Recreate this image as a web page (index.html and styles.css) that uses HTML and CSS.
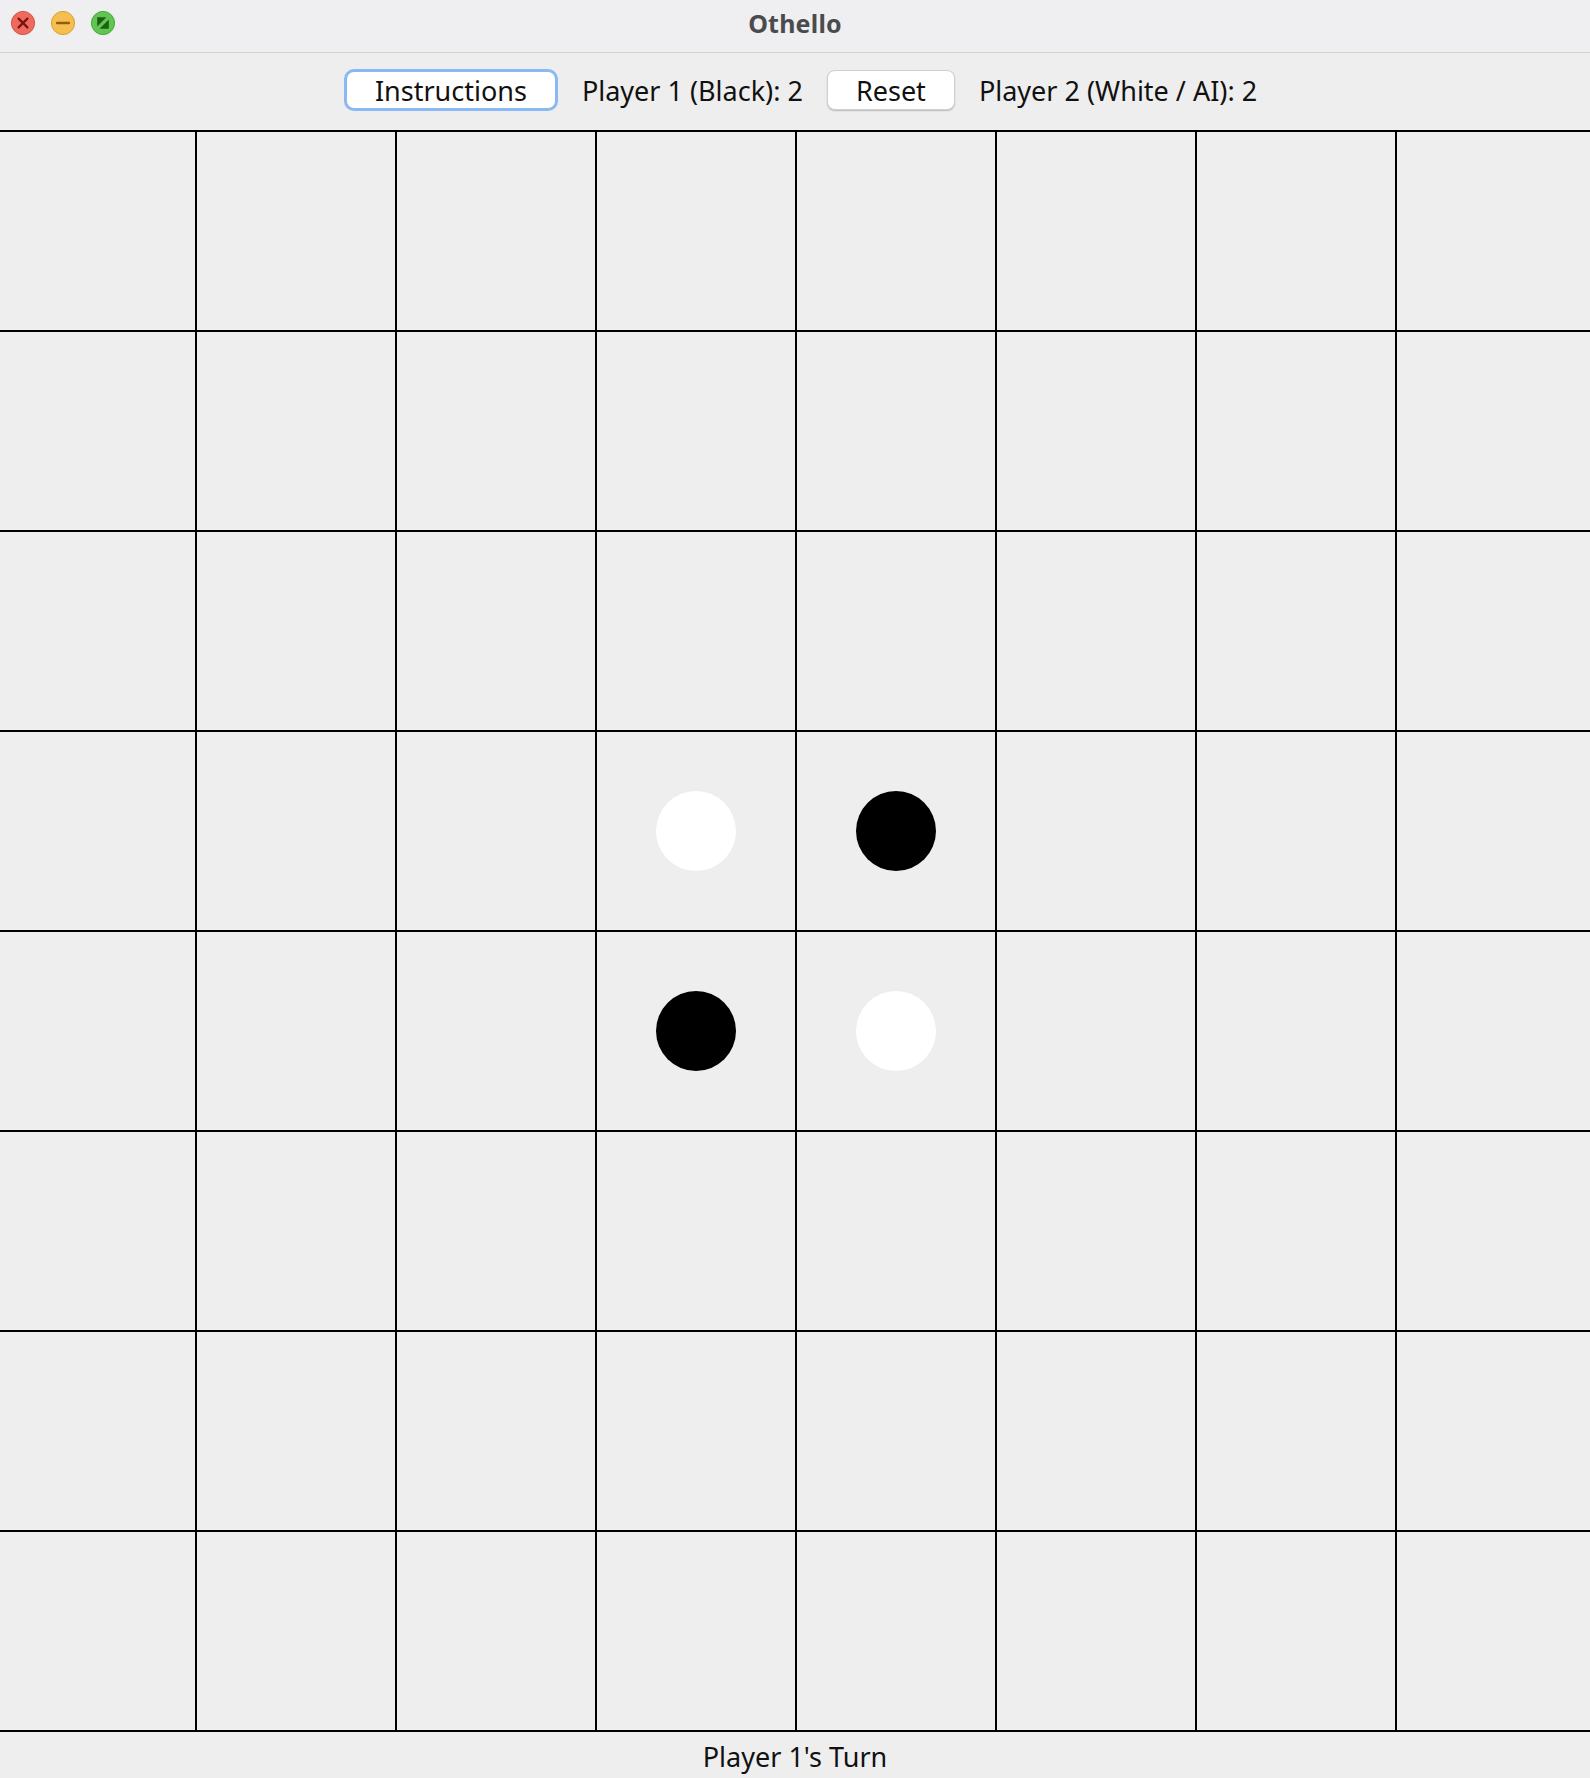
FILE: index.html
```html
<!DOCTYPE html>
<html>
<head>
<meta charset="utf-8">
<title>Othello</title>
<link rel="stylesheet" href="styles.css">
</head>
<body>
<div class="window">
  <div class="titlebar">
    <div class="lights">
      <svg class="light" width="26" height="26" viewBox="0 0 26 26">
        <circle cx="13" cy="13" r="11.6" fill="#ee6a5f" stroke="#d4544a" stroke-width="1"/>
        <path d="M8.6 8.6 L17.4 17.4 M17.4 8.6 L8.6 17.4" stroke="#7a1410" stroke-width="2.3" stroke-linecap="round"/>
      </svg>
      <svg class="light" width="26" height="26" viewBox="0 0 26 26">
        <circle cx="13" cy="13" r="11.6" fill="#f5bf4f" stroke="#d9a133" stroke-width="1"/>
        <path d="M7.2 13 L18.8 13" stroke="#985712" stroke-width="2.6" stroke-linecap="round"/>
      </svg>
      <svg class="light" width="26" height="26" viewBox="0 0 26 26">
        <circle cx="13" cy="13" r="11.6" fill="#61c554" stroke="#4aa73d" stroke-width="1"/>
        <path d="M7.2 7.2 L16.4 7.2 L7.2 16.4 Z" fill="#1c5f12"/>
        <path d="M18.8 18.8 L9.6 18.8 L18.8 9.6 Z" fill="#1c5f12"/>
      </svg>
    </div>
    <div class="title">Othello</div>
  </div>
  <div class="toolbar">
    <button class="btn btn-focus">Instructions</button>
    <span class="score">Player 1 (Black): 2</span>
    <button class="btn btn-plain">Reset</button>
    <span class="score">Player 2 (White / AI): 2</span>
  </div>
  <div class="board-wrap">
    <div class="board">
      <div class="cell"></div><div class="cell"></div><div class="cell"></div><div class="cell"></div><div class="cell"></div><div class="cell"></div><div class="cell"></div><div class="cell"></div>
      <div class="cell"></div><div class="cell"></div><div class="cell"></div><div class="cell"></div><div class="cell"></div><div class="cell"></div><div class="cell"></div><div class="cell"></div>
      <div class="cell"></div><div class="cell"></div><div class="cell"></div><div class="cell"></div><div class="cell"></div><div class="cell"></div><div class="cell"></div><div class="cell"></div>
      <div class="cell"></div><div class="cell"></div><div class="cell"></div><div class="cell"><div class="disc white"></div></div><div class="cell"><div class="disc black"></div></div><div class="cell"></div><div class="cell"></div><div class="cell"></div>
      <div class="cell"></div><div class="cell"></div><div class="cell"></div><div class="cell"><div class="disc black"></div></div><div class="cell"><div class="disc white"></div></div><div class="cell"></div><div class="cell"></div><div class="cell"></div>
      <div class="cell"></div><div class="cell"></div><div class="cell"></div><div class="cell"></div><div class="cell"></div><div class="cell"></div><div class="cell"></div><div class="cell"></div>
      <div class="cell"></div><div class="cell"></div><div class="cell"></div><div class="cell"></div><div class="cell"></div><div class="cell"></div><div class="cell"></div><div class="cell"></div>
      <div class="cell"></div><div class="cell"></div><div class="cell"></div><div class="cell"></div><div class="cell"></div><div class="cell"></div><div class="cell"></div><div class="cell"></div>
    </div>
  </div>
  <div class="status">Player 1's Turn</div>
</div>
</body>
</html>
```

FILE: styles.css
```css
html, body {
  margin: 0;
  padding: 0;
  background: #eeeeee;
}

body {
  width: 1590px;
  height: 1778px;
  overflow: hidden;
  font-family: "Noto Sans", "DejaVu Sans", sans-serif;
  color: #111111;
}

.window {
  width: 1590px;
  height: 1778px;
  display: flex;
  flex-direction: column;
  overflow: hidden;
  background: #eeeeee;
}

.titlebar {
  height: 52px;
  flex: 0 0 52px;
  background: #efeff1;
  border-bottom: 1px solid #d2d2d4;
  display: flex;
  align-items: center;
  justify-content: center;
  position: relative;
}

.lights {
  position: absolute;
  left: 10px;
  top: 10px;
  display: flex;
  gap: 14px;
}

.light {
  display: block;
}

.title {
  font-weight: bold;
  font-size: 25px;
  color: #4b4b4d;
  letter-spacing: 0.2px;
  margin-top: -6px;
}

.toolbar {
  height: 77px;
  flex: 0 0 77px;
  box-sizing: border-box;
  display: flex;
  align-items: center;
  justify-content: center;
  gap: 24px;
  padding-left: 11px;
  padding-bottom: 3px;
}

.btn {
  font-family: "Noto Sans", "DejaVu Sans", sans-serif;
  font-size: 27px;
  color: #111111;
  background: #ffffff;
  box-sizing: border-box;
  padding: 0;
  margin: 0;
  line-height: 1;
  display: flex;
  align-items: center;
  justify-content: center;
}

.btn-focus {
  width: 214px;
  height: 42px;
  border: 3px solid #8ab8f2;
  border-radius: 10px;
}

.btn-plain {
  width: 128px;
  height: 40px;
  border: 1px solid #d0d0d0;
  border-radius: 8px;
  box-shadow: 0 1px 1.5px rgba(0, 0, 0, 0.22);
}

.score {
  font-size: 27px;
  color: #111111;
  white-space: nowrap;
}

.board-wrap {
  flex: 0 0 1602px;
  height: 1602px;
  overflow: hidden;
  position: relative;
}

.board {
  width: 1600px;
  margin-left: -5px;
  display: grid;
  grid-template-columns: repeat(8, 200px);
  grid-template-rows: repeat(8, 200px);
  border-bottom: 2px solid #000000;
}

.cell {
  box-sizing: border-box;
  border-top: 2px solid #000000;
  border-left: 2px solid #000000;
  background: #eeeeee;
  display: flex;
  align-items: center;
  justify-content: center;
}

.disc {
  width: 80px;
  height: 80px;
  border-radius: 50%;
}

.disc.white {
  background: #ffffff;
}

.disc.black {
  background: #000000;
}

.status {
  flex: 1 1 auto;
  display: flex;
  align-items: center;
  justify-content: center;
  font-size: 27px;
  color: #111111;
  padding-top: 2px;
}
```
